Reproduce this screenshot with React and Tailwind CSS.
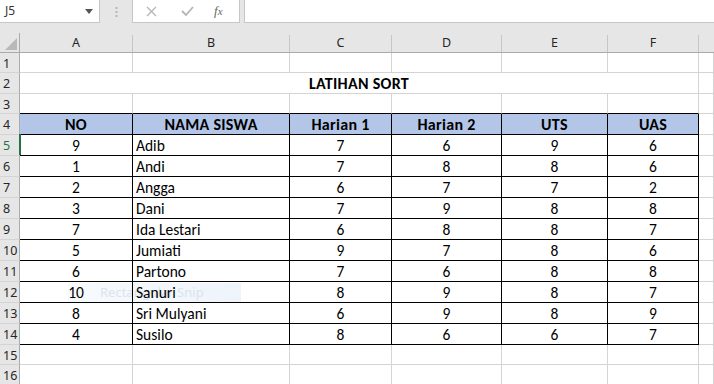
import React from 'react';

const cols = ['A', 'B', 'C', 'D', 'E', 'F'];

const data = [
    [9, 'Adib', 7, 6, 9, 6],
    [1, 'Andi', 7, 8, 8, 6],
    [2, 'Angga', 6, 7, 7, 2],
    [3, 'Dani', 7, 9, 8, 8],
    [7, 'Ida Lestari', 6, 8, 8, 7],
    [5, 'Jumiati', 9, 7, 8, 6],
    [6, 'Partono', 7, 6, 8, 8],
    [10, 'Sanuri', 8, 9, 8, 7],
    [8, 'Sri Mulyani', 6, 9, 8, 9],
    [4, 'Susilo', 8, 6, 6, 7],
];

const headers = ['NO', 'NAMA SISWA', 'Harian 1', 'Harian 2', 'UTS', 'UAS'];

const cellFont = { fontFamily: 'Carlito, Lato, "Open Sans", sans-serif' };

const RowHead = ({ n, h, active }) => (
    <div
        className={`${h} border-r border-b border-r-[#ababab] border-b-[#d4d4d4] bg-[#e6e6e6] pl-[3px] text-[12.5px] leading-[21px] ${active ? 'text-[#217346]' : 'text-[#262626]'}`}
        style={{ fontFamily: '"Noto Sans", "Open Sans", sans-serif' }}
    >
        {n}
    </div>
);

const Blank = ({ h, bottom }) => (
    <div className={`${h} border-r border-b border-r-[#d4d4d4] ${bottom ? 'border-b-black' : 'border-b-[#d4d4d4]'}`} />
);

const App = () => {
    return (
        <div className="w-[714px] h-[384px] overflow-hidden bg-white relative select-none">
            {/* faded snip tooltip, sits behind the cell text */}
            <div className="absolute z-0 left-[68px] top-[283px] w-[173px] h-[20px] bg-gradient-to-r from-[#f2f7fc]/60 to-[#eef4fb] flex items-center pl-[32px]">
                <span className="text-[13px] text-[#dde3ea]" style={{ fontFamily: '"Noto Sans", sans-serif' }}>Rectangular Snip</span>
            </div>

            {/* formula bar */}
            <div className="relative z-10 h-[33px] bg-[#e6e6e6] flex items-start">
                <div className="w-[100px] h-[23px] bg-white border-r border-b border-[#c6c6c6] flex items-center justify-between pl-[5px] pr-[6px]">
                    <span className="text-[12px] text-[#333]" style={{ fontFamily: '"Noto Sans", sans-serif' }}>J5</span>
                    <svg width="8" height="5" viewBox="0 0 8 5"><path d="M0 0 L8 0 L4 5 Z" fill="#555" /></svg>
                </div>
                <div className="w-[32px] h-[23px] flex items-center justify-center">
                    <svg width="3" height="10" viewBox="0 0 3 10">
                        <rect x="0.5" y="0" width="2" height="2" fill="#b8b8b8" />
                        <rect x="0.5" y="4" width="2" height="2" fill="#b8b8b8" />
                        <rect x="0.5" y="8" width="2" height="2" fill="#b8b8b8" />
                    </svg>
                </div>
                <div className="w-[108px] h-[23px] bg-white border-l border-r border-b border-[#c6c6c6] flex items-center">
                    <svg className="ml-[13px]" width="11" height="11" viewBox="0 0 11 11">
                        <path d="M1 1 L10 10 M10 1 L1 10" stroke="#b4b4b4" strokeWidth="1.3" />
                    </svg>
                    <svg className="ml-[24px]" width="13" height="10" viewBox="0 0 13 10">
                        <path d="M1 5 L5 9 L12 1" stroke="#b4b4b4" strokeWidth="1.8" fill="none" />
                    </svg>
                    <span className="ml-[20px] italic text-[13px] text-[#666]" style={{ fontFamily: '"Liberation Serif", serif' }}>
                        f<span className="text-[11px]">x</span>
                    </span>
                </div>
                <div className="ml-[4px] flex-1 h-[23px] bg-white border-l border-b border-[#c6c6c6]" />
            </div>

            {/* sheet grid */}
            <div className="relative z-10 grid grid-cols-[20px_113px_157px_102px_110px_106px_91px_1fr]">
                {/* column headers */}
                <div className="h-[20px] bg-[#e6e6e6] border-r border-b border-r-[#ababab] border-b-[#ababab] relative">
                    <svg className="absolute right-[2px] bottom-[2px]" width="12" height="12" viewBox="0 0 12 12">
                        <path d="M12 0 L12 12 L0 12 Z" fill="#b9b9b9" />
                    </svg>
                </div>
                {cols.map((c) => (
                    <div
                        key={c}
                        className="h-[20px] bg-[#e6e6e6] border-b border-b-[#ababab] flex items-stretch"
                        style={{ fontFamily: '"Noto Sans", "Open Sans", sans-serif' }}
                    >
                        <div className="flex-1 text-center text-[12.5px] leading-[20px] text-[#262626]">{c}</div>
                        <div className="w-px mt-[2px] bg-[#c6c6c6]" />
                    </div>
                ))}
                <div className="h-[20px] bg-[#e6e6e6] border-b border-b-[#ababab]" />

                {/* row 1 */}
                <RowHead n={1} h="h-[20px]" />
                {cols.map((c) => <Blank key={c} h="h-[20px]" />)}
                <Blank h="h-[20px]" />

                {/* row 2 */}
                <RowHead n={2} h="h-[21px]" />
                <div
                    className="col-span-6 h-[21px] border-r border-b border-[#d4d4d4] text-center font-bold text-[16px] tracking-[0.3px] leading-[22px] text-black"
                    style={cellFont}
                >
                    LATIHAN SORT
                </div>
                <Blank h="h-[21px]" />

                {/* row 3 */}
                <RowHead n={3} h="h-[20px]" />
                {cols.map((c) => <Blank key={c} h="h-[20px]" bottom />)}
                <Blank h="h-[20px]" />

                {/* row 4 headers */}
                <RowHead n={4} h="h-[21px]" />
                {headers.map((t) => (
                    <div
                        key={t}
                        className="h-[21px] bg-[#b4c6e7] border-r border-b border-black text-center font-bold text-[16px] tracking-[0.3px] leading-[22px] text-black"
                        style={cellFont}
                    >
                        {t}
                    </div>
                ))}
                <Blank h="h-[21px]" />

                {/* data */}
                {data.map((row, i) => (
                    <React.Fragment key={i}>
                        <RowHead n={i + 5} h="h-[21px]" active={i === 0} />
                        {row.map((v, j) => (
                            <div
                                key={j}
                                className={`h-[21px] border-r border-b border-black text-[15.5px] leading-[22px] text-black ${j === 1 ? 'text-left pl-[3px]' : 'text-center'} ${i === 0 && j === 0 ? 'relative' : ''}`}
                                style={cellFont}
                            >
                                {i === 0 && j === 0 && <div className="absolute left-[-1px] top-[-1px] bottom-0 w-[2px] bg-[#217346]" />}
                                {v}
                            </div>
                        ))}
                        <Blank h="h-[21px]" />
                    </React.Fragment>
                ))}

                {/* rows 15-16 */}
                {[15, 16].map((n) => (
                    <React.Fragment key={n}>
                        <RowHead n={n} h="h-[20px]" />
                        {cols.map((c) => <Blank key={c} h="h-[20px]" />)}
                        <Blank h="h-[20px]" />
                    </React.Fragment>
                ))}
            </div>
        </div>
    );
};

export default App;
